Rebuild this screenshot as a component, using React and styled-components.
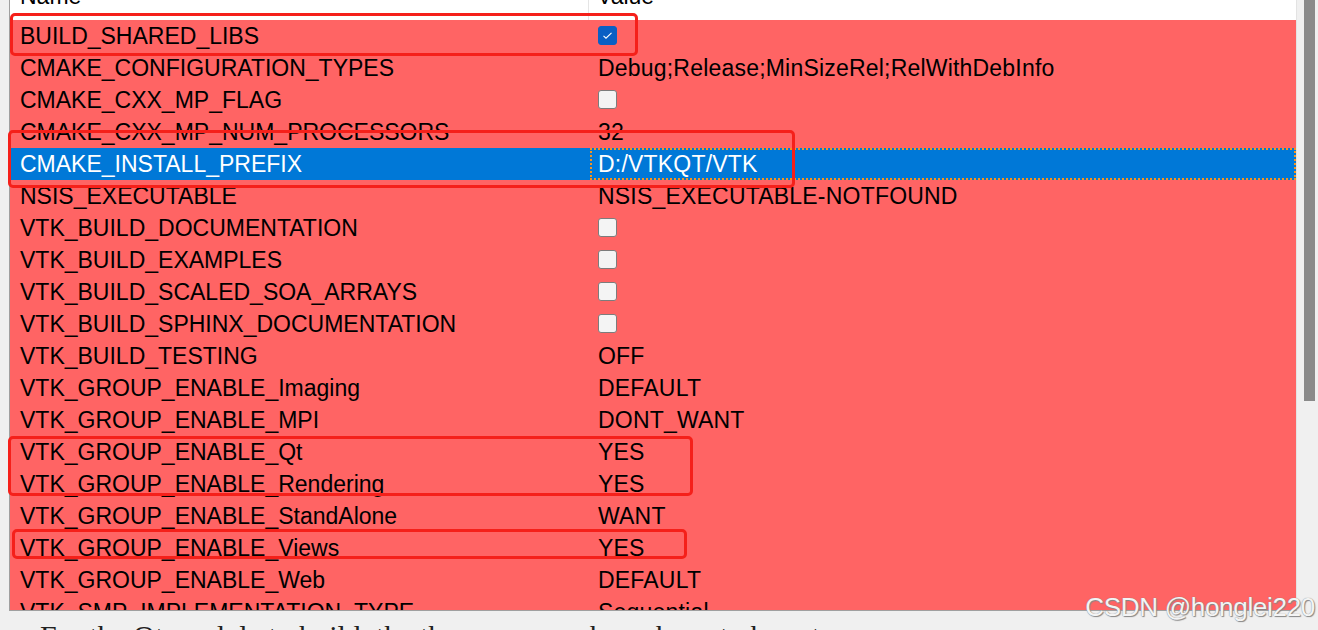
import React from "react";
import styled, { createGlobalStyle } from "styled-components";

const rows = [
	{ name: "BUILD_SHARED_LIBS", check: true },
	{ name: "CMAKE_CONFIGURATION_TYPES", value: "Debug;Release;MinSizeRel;RelWithDebInfo" },
	{ name: "CMAKE_CXX_MP_FLAG", check: false },
	{ name: "CMAKE_CXX_MP_NUM_PROCESSORS", value: "32" },
	{ name: "CMAKE_INSTALL_PREFIX", value: "D:/VTKQT/VTK", selected: true },
	{ name: "NSIS_EXECUTABLE", value: "NSIS_EXECUTABLE-NOTFOUND" },
	{ name: "VTK_BUILD_DOCUMENTATION", check: false },
	{ name: "VTK_BUILD_EXAMPLES", check: false },
	{ name: "VTK_BUILD_SCALED_SOA_ARRAYS", check: false },
	{ name: "VTK_BUILD_SPHINX_DOCUMENTATION", check: false },
	{ name: "VTK_BUILD_TESTING", value: "OFF" },
	{ name: "VTK_GROUP_ENABLE_Imaging", value: "DEFAULT" },
	{ name: "VTK_GROUP_ENABLE_MPI", value: "DONT_WANT" },
	{ name: "VTK_GROUP_ENABLE_Qt", value: "YES" },
	{ name: "VTK_GROUP_ENABLE_Rendering", value: "YES" },
	{ name: "VTK_GROUP_ENABLE_StandAlone", value: "WANT" },
	{ name: "VTK_GROUP_ENABLE_Views", value: "YES" },
	{ name: "VTK_GROUP_ENABLE_Web", value: "DEFAULT" },
	{ name: "VTK_SMP_IMPLEMENTATION_TYPE", value: "Sequential" },
];

// red marker boxes drawn over the screenshot
const marks = [
	{ left: 10, top: 13, width: 628, height: 43 },
	{ left: 8, top: 130, width: 787, height: 58 },
	{ left: 8, top: 436, width: 685, height: 60 },
	{ left: 12, top: 529, width: 675, height: 30 },
];

export default function App() {
	return (
		<>
			<GlobalStyle />
			<Page>
				<Top>
					<Table>
						<Header>
							<HeaderName>
								<HeaderLabel>Name</HeaderLabel>
							</HeaderName>
							<HeaderValue>
								<HeaderLabel>Value</HeaderLabel>
							</HeaderValue>
						</Header>
						{rows.map((r) => (
							<Row key={r.name} selected={r.selected}>
								<NameCell>{r.name}</NameCell>
								<ValueCell focused={r.selected}>
									{r.check === undefined ? (
										r.value
									) : (
										<Check checked={r.check}>
											{r.check && (
												<svg width="11" height="9" viewBox="0 0 11 9">
													<polyline
														points="1.5,4.8 4,7.2 9.5,1.8"
														fill="none"
														stroke="#fff"
														strokeWidth="1.1"
													/>
												</svg>
											)}
										</Check>
									)}
								</ValueCell>
							</Row>
						))}
					</Table>
					<Scrollbar>
						<Thumb />
					</Scrollbar>
				</Top>
				<Below>For the Qt module to build, the three groups above have to be set</Below>
				{marks.map((m, i) => (
					<Mark key={i} style={m} />
				))}
				<Watermark>CSDN @honglei220</Watermark>
			</Page>
		</>
	);
}

const GlobalStyle = createGlobalStyle`
	body {
		margin: 0;
		background: #f0f0f0;
		overflow: hidden;
		font-family: "Liberation Sans", Arial, sans-serif;
	}
`;

const Page = styled.div`
	position: relative;
	width: 1318px;
	height: 630px;
	overflow: hidden;
	background: #f0f0f0;
`;

const Top = styled.div`
	display: flex;
	height: 611px;
	padding-left: 9px;
`;

const Table = styled.div`
	width: 1288px;
	height: 611px;
	box-sizing: border-box;
	border-left: 1px solid #a0a0a0;
	border-bottom: 1px solid #a0a0a0;
	border-right: 1px solid #e3e3e3;
	overflow: hidden;
	display: flex;
	flex-direction: column;
	font-size: 23px;
	color: #000;
`;

const Header = styled.div`
	display: flex;
	flex-shrink: 0;
	height: 20px;
	background: #fff;
	overflow: hidden;
`;

const HeaderName = styled.div`
	width: 579px;
	padding-left: 10px;
	box-sizing: border-box;
	border-right: 1px solid #e5e5e5;
	display: flex;
	align-items: flex-end;
`;

const HeaderValue = styled.div`
	flex: 1;
	padding-left: 8px;
	display: flex;
	align-items: flex-end;
`;

const HeaderLabel = styled.span`
	line-height: 23px;
	margin-bottom: 12px;
	white-space: nowrap;
`;

const Row = styled.div`
	display: flex;
	flex-shrink: 0;
	height: 32px;
	line-height: 32px;
	white-space: nowrap;
	background: ${(p) => (p.selected ? "#0078d7" : "#ff6464")};
	color: ${(p) => (p.selected ? "#fff" : "#000")};
`;

const NameCell = styled.div`
	width: 580px;
	padding-left: 10px;
	box-sizing: border-box;
`;

const ValueCell = styled.div`
	flex: 1;
	display: flex;
	align-items: center;
	padding-left: 8px;
	box-sizing: border-box;
	letter-spacing: 0.2px;
	${(p) => p.focused && "border: 2px dotted #f7931e; padding-left: 6px;"}
`;

const Check = styled.div`
	width: 19px;
	height: 19px;
	box-sizing: border-box;
	border-radius: 3px;
	display: flex;
	align-items: center;
	justify-content: center;
	margin-top: -1px;
	background: ${(p) => (p.checked ? "#0a5fc4" : "#f4f4f4")};
	border: 1px solid ${(p) => (p.checked ? "#0a5fc4" : "#7c7c7c")};
`;

const Scrollbar = styled.div`
	width: 21px;
	height: 611px;
	padding-left: 7px;
	box-sizing: border-box;
	background: #f0f0f0;
`;

const Thumb = styled.div`
	width: 11px;
	height: 401px;
	background: #8a8a8a;
`;

const Below = styled.div`
	padding-left: 40px;
	margin-top: 10px;
	font-family: "Liberation Serif", "Times New Roman", serif;
	font-size: 30px;
	line-height: 30px;
	color: #222;
	white-space: nowrap;
`;

const Mark = styled.div`
	position: absolute;
	box-sizing: border-box;
	border: 3px solid #f5201a;
	border-radius: 5px;
	pointer-events: none;
`;

const Watermark = styled.div`
	position: absolute;
	right: 3px;
	top: 592px;
	font-size: 26px;
	letter-spacing: -0.3px;
	color: #f4f4f4;
	text-shadow: 0 0 1px #777, 1px 1px 1px #888;
	white-space: nowrap;
`;
